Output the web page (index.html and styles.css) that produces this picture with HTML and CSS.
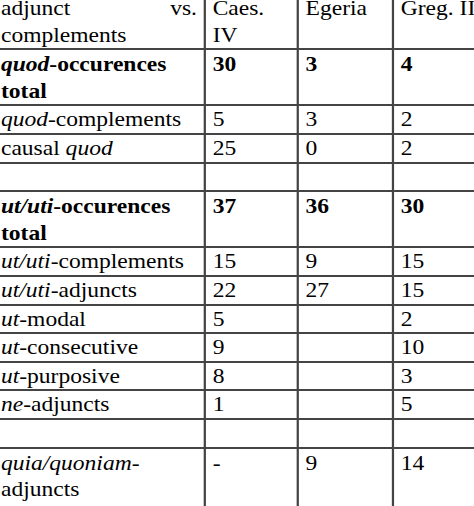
FILE: index.html
```html
<!DOCTYPE html>
<html lang="en">
<head>
<meta charset="utf-8">
<title>quod / ut occurrences</title>
<link rel="stylesheet" href="styles.css">
</head>
<body>
<div class="sheet">
<table class="grid">
<colgroup><col class="c1"><col class="c2"><col class="c3"><col class="c4"></colgroup>
<tbody>
<tr class="two"><td class="just">adjunct vs. complements</td><td>Caes.<br>IV</td><td>Egeria</td><td>Greg. II</td></tr>
<tr class="strong two"><td><i>quod</i>-occurences total</td><td>30</td><td>3</td><td>4</td></tr>
<tr><td><i>quod</i>-complements</td><td>5</td><td>3</td><td>2</td></tr>
<tr><td>causal <i>quod</i></td><td>25</td><td>0</td><td>2</td></tr>
<tr><td>&nbsp;</td><td></td><td></td><td></td></tr>
<tr class="strong two"><td><i>ut/uti</i>-occurences total</td><td>37</td><td>36</td><td>30</td></tr>
<tr><td><i>ut/uti</i>-complements</td><td>15</td><td>9</td><td>15</td></tr>
<tr><td><i>ut/uti</i>-adjuncts</td><td>22</td><td>27</td><td>15</td></tr>
<tr><td><i>ut</i>-modal</td><td>5</td><td></td><td>2</td></tr>
<tr><td><i>ut</i>-consecutive</td><td>9</td><td></td><td>10</td></tr>
<tr><td><i>ut</i>-purposive</td><td>8</td><td></td><td>3</td></tr>
<tr><td><i>ne</i>-adjuncts</td><td>1</td><td></td><td>5</td></tr>
<tr><td>&nbsp;</td><td></td><td></td><td></td></tr>
<tr class="two last"><td><i>quia/quoniam-</i><wbr>adjuncts</td><td>-</td><td>9</td><td>14</td></tr>
</tbody>
</table>
</div>
</body>
</html>
```
FILE: styles.css
```css
html, body {
  margin: 0;
  padding: 0;
  overflow: hidden;
  background: #fff;
}
.sheet {
  width: max-content;
  margin: -8px 0 0 -8px;
  transform: scaleX(1.12);
  transform-origin: 0 0;
}
.grid {
  border-collapse: collapse;
  table-layout: fixed;
  width: 441px;
  font-family: "Liberation Serif", "Times New Roman", serif;
  font-size: 21px;
  line-height: 26.6px;
  color: #000;
}
.c1 { width: 189px; }
.c2 { width: 83px; }
.c3 { width: 85px; }
.c4 { width: 84px; }
.grid td {
  border: 2px solid #444;
  padding: 0 6px;
  vertical-align: top;
  text-align: left;
}
.grid .two td {
  padding-top: 1px;
}
.grid .last td {
  padding-bottom: 6px;
}
.grid td.just {
  text-align: justify;
}
.strong td {
  font-weight: bold;
}
```
